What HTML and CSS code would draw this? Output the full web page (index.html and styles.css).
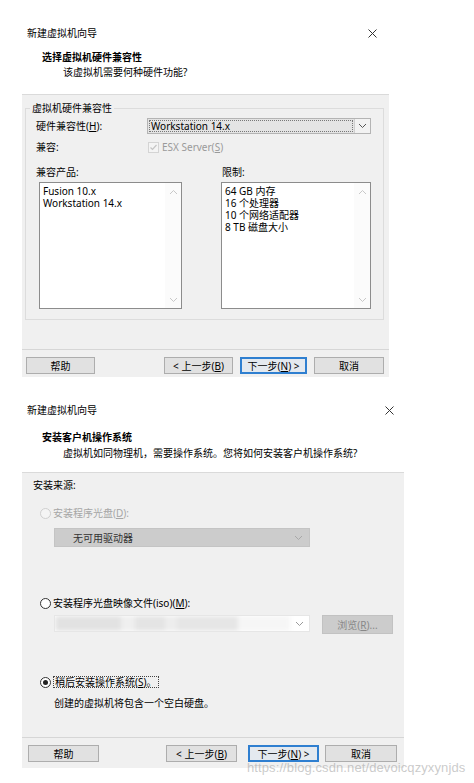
FILE: index.html
```html
<!DOCTYPE html>
<html lang="zh-CN">
<head>
  <meta charset="UTF-8" />
  <meta name="viewport" content="width=device-width, initial-scale=1.0" />
  <title>新建虚拟机向导</title>
  <link rel="stylesheet" href="styles.css">
</head>
<body>
  <!-- Passo 1: compatibilidade de hardware -->
  <div class="wizard wizard-hw">
    <div class="titlebar">
      <span>新建虚拟机向导</span>
      <svg class="close" width="9" height="9" viewBox="0 0 9 9"><path d="M0.5 0.5 L8.5 8.5 M8.5 0.5 L0.5 8.5" stroke="#333" stroke-width="1"/></svg>
    </div>
    <div class="header">
      <div class="header-title">选择虚拟机硬件兼容性</div>
      <div class="header-sub">该虚拟机需要何种硬件功能?</div>
    </div>
    <div class="wizard-body">
      <fieldset class="group">
        <legend>虚拟机硬件兼容性</legend>
        <div class="form-row row-compat">
          <label>硬件兼容性(<u>H</u>):</label>
          <div class="combo">
            <div class="combo-value"><span>Workstation 14.x</span></div>
            <div class="combo-arrow">
              <svg width="9" height="6" viewBox="0 0 9 6"><polyline points="1,1 4.5,4.5 8,1" fill="none" stroke="#555" stroke-width="1"/></svg>
            </div>
          </div>
        </div>
        <div class="form-row row-esx">
          <label>兼容:</label>
          <div class="check-field">
            <span class="checkbox">
              <svg width="9" height="9" viewBox="0 0 9 9"><polyline points="1.5,4.5 3.5,6.5 7.5,2" fill="none" stroke="#c4c4c4" stroke-width="1.2"/></svg>
            </span>
            <span class="muted">ESX Server(<u>S</u>)</span>
          </div>
        </div>
        <div class="lists">
          <div class="list-col">
            <div class="list-label">兼容产品:</div>
            <div class="listbox list-products">
              <div class="list-items">
                <div>Fusion 10.x</div>
                <div>Workstation 14.x</div>
              </div>
              <div class="scroll">
                <svg width="9" height="6" viewBox="0 0 9 6"><polyline points="1,5 4.5,1.5 8,5" fill="none" stroke="#c8c8c8" stroke-width="1"/></svg>
                <svg width="9" height="6" viewBox="0 0 9 6"><polyline points="1,1 4.5,4.5 8,1" fill="none" stroke="#c8c8c8" stroke-width="1"/></svg>
              </div>
            </div>
          </div>
          <div class="list-col">
            <div class="list-label">限制:</div>
            <div class="listbox list-limits">
              <div class="list-items">
                <div>64 GB 内存</div>
                <div>16 个处理器</div>
                <div>10 个网络适配器</div>
                <div>8 TB 磁盘大小</div>
              </div>
              <div class="scroll">
                <svg width="9" height="6" viewBox="0 0 9 6"><polyline points="1,5 4.5,1.5 8,5" fill="none" stroke="#c8c8c8" stroke-width="1"/></svg>
                <svg width="9" height="6" viewBox="0 0 9 6"><polyline points="1,1 4.5,4.5 8,1" fill="none" stroke="#c8c8c8" stroke-width="1"/></svg>
              </div>
            </div>
          </div>
        </div>
      </fieldset>

      <div class="footer">
        <button class="btn">帮助</button>
        <div class="nav">
          <button class="btn">&lt; 上一步(<u>B</u>)</button>
          <button class="btn btn-default">下一步(<u>N</u>) &gt;</button>
          <button class="btn">取消</button>
        </div>
      </div>
    </div>
  </div>

  <!-- Passo 2: instalação do sistema convidado -->
  <div class="wizard wizard-os">
    <div class="titlebar">
      <span>新建虚拟机向导</span>
      <svg class="close" width="9" height="9" viewBox="0 0 9 9"><path d="M0.5 0.5 L8.5 8.5 M8.5 0.5 L0.5 8.5" stroke="#333" stroke-width="1"/></svg>
    </div>
    <div class="header">
      <div class="header-title">安装客户机操作系统</div>
      <div class="header-sub">虚拟机如同物理机，需要操作系统。您将如何安装客户机操作系统?</div>
    </div>
    <div class="wizard-body">
      <div class="source-label">安装来源:</div>

      <div class="radio-row row-disc disabled">
        <span class="radio"></span>
        <span>安装程序光盘(<u>D</u>):</span>
      </div>
      <div class="select-disabled">
        <span>无可用驱动器</span>
        <svg width="9" height="6" viewBox="0 0 9 6"><polyline points="1,1 4.5,4.5 8,1" fill="none" stroke="#a8a8a8" stroke-width="1"/></svg>
      </div>

      <div class="radio-row row-iso">
        <span class="radio"></span>
        <span>安装程序光盘映像文件(iso)(<u>M</u>):</span>
      </div>
      <div class="iso-row">
        <div class="combo-path">
          <div class="path-blur"></div>
          <svg width="9" height="6" viewBox="0 0 9 6"><polyline points="1,1 4.5,4.5 8,1" fill="none" stroke="#9a9a9a" stroke-width="1"/></svg>
        </div>
        <button class="btn btn-browse">浏览(<u>R</u>)...</button>
      </div>

      <div class="radio-row row-later">
        <span class="radio checked"></span>
        <span class="focus-text">稍后安装操作系统(<u>S</u>)。</span>
      </div>
      <div class="later-note">创建的虚拟机将包含一个空白硬盘。</div>

      <div class="footer">
        <button class="btn">帮助</button>
        <div class="nav">
          <button class="btn">&lt; 上一步(<u>B</u>)</button>
          <button class="btn btn-default">下一步(<u>N</u>) &gt;</button>
          <button class="btn">取消</button>
        </div>
      </div>

      <div class="watermark">https://blog.csdn.net/devoicqzyxynjds</div>
    </div>
  </div>
</body>
</html>
```

FILE: styles.css
```css
body {
  margin: 0;
  padding-bottom: 13px;
  background-color: #fff;
  font-family: "Noto Sans", "Noto Sans CJK SC", sans-serif;
  font-size: 10px;
  line-height: 12px;
  color: #000;
}

u {
  text-decoration: underline;
  text-underline-offset: 1px;
}

.wizard {
  margin-left: 22px;
}

.wizard-hw {
  width: 367px;
}

.wizard-os {
  width: 382px;
}

/* Barra de título */
.titlebar {
  height: 47px;
  box-sizing: border-box;
  padding: 27px 12px 0 5px;
  display: flex;
  justify-content: space-between;
  align-items: flex-start;
}

.titlebar .close {
  margin-top: 2px;
}

.wizard-os .titlebar {
  padding-right: 10px;
}

/* Cabeçalho */
.header {
  height: 47px;
  box-sizing: border-box;
  padding: 4px 0 0 20px;
}

.header-title {
  font-weight: bold;
}

.header-sub {
  margin-top: 3px;
  padding-left: 21px;
}

.wizard-os .header {
  height: 48px;
  padding-top: 7px;
}

.wizard-os .header-sub {
  margin-top: 4px;
}

.wizard-body {
  position: relative;
  background-color: #f0f0f0;
  border-top: 1px solid #dadada;
}

/* Grupo de compatibilidade */
.group {
  margin: 7px 5px 0 3px;
  padding: 4px 12px 10px 10px;
  border: 1px solid #dcdcdc;
  min-width: 0;
}

.group legend {
  margin-left: -6px;
  padding: 0 2px;
  line-height: 12px;
}

.form-row {
  display: grid;
  grid-template-columns: 111px 1fr;
  align-items: center;
}

.row-compat {
  height: 16px;
}

.row-esx {
  height: 14px;
  margin-top: 6px;
}

.combo {
  display: flex;
  height: 16px;
  box-sizing: border-box;
  border: 1px solid #b4b4b4;
  background-color: #f2f2f2;
}

.combo-value {
  flex: 1;
  padding: 1px;
  background-color: #e4e4e4;
  border-right: 1px solid #cfcfcf;
}

.combo-value span {
  display: block;
  height: 12px;
  line-height: 11px;
  padding-left: 1px;
  border: 1px dotted #777;
  box-sizing: border-box;
}

.combo-arrow {
  width: 15px;
  display: flex;
  align-items: center;
  justify-content: center;
}

.check-field {
  display: flex;
  align-items: center;
  gap: 3px;
  padding-left: 1px;
}

.checkbox {
  width: 9px;
  height: 9px;
  border: 1px solid #d4d4d4;
  background-color: #f4f4f4;
  display: flex;
}

.muted {
  color: #9a9a9a;
}

.lists {
  display: grid;
  grid-template-columns: 146px 150px;
  column-gap: 39px;
  margin-top: 12px;
}

.list-label {
  height: 12px;
}

.list-col + .list-col .list-label {
  padding-left: 1px;
}

.listbox {
  display: flex;
  height: 127px;
  box-sizing: border-box;
  margin-top: 4px;
  border: 1px solid #8c8c8c;
  background-color: #fff;
}

.list-products {
  margin-left: 3px;
}

.list-items {
  flex: 1;
  padding: 2px 3px;
  line-height: 12px;
}

.scroll {
  width: 16px;
  display: flex;
  flex-direction: column;
  justify-content: space-between;
  align-items: center;
  padding: 6px 0 5px;
  background-color: #fbfbfb;
}

/* Rodapé com botões */
.footer {
  margin-top: 29px;
  border-top: 1px solid #d6d6d6;
  padding: 7px 5px 3px 4px;
  display: flex;
  justify-content: space-between;
}

.nav {
  display: flex;
}

.btn {
  width: 69px;
  height: 17px;
  padding: 0;
  font-family: inherit;
  font-size: 10px;
  line-height: 12px;
  color: #000;
  background-color: #e1e1e1;
  border: 1px solid #adadad;
}

.nav .btn + .btn {
  margin-left: 7px;
}

.nav .btn-default {
  margin-left: 8px;
  width: 67px;
}

.nav .btn-default + .btn {
  width: 70px;
}

.btn-default {
  border-color: #2f7fd0;
  box-shadow: inset 0 0 0 1px #2f7fd0;
  background-color: #e4e9ef;
}

.wizard-os .footer {
  margin-top: 28px;
  padding: 7px 7px 6px 6px;
}

.wizard-os .btn {
  width: 71px;
}

.wizard-os .nav .btn-default {
  margin-left: 11px;
  width: 71px;
}

.wizard-os .nav .btn-default + .btn {
  margin-left: 6px;
  width: 72px;
}

/* Origem da instalação */
.source-label {
  padding: 6px 0 0 11px;
}

.radio-row {
  display: flex;
  align-items: center;
  gap: 2px;
  padding-left: 18px;
  height: 12px;
}

.radio {
  width: 11px;
  height: 11px;
  box-sizing: border-box;
  border: 1px solid #333;
  border-radius: 50%;
  background-color: #fff;
  display: flex;
  align-items: center;
  justify-content: center;
}

.radio.checked::after {
  content: "";
  width: 5px;
  height: 5px;
  border-radius: 50%;
  background-color: #222;
}

.disabled {
  color: #a6a6a6;
}

.disabled .radio {
  border-color: #cfcfcf;
  background-color: #f4f4f4;
}

.row-disc {
  margin-top: 16px;
}

.select-disabled {
  margin: 9px 0 0 32px;
  width: 256px;
  height: 19px;
  box-sizing: border-box;
  padding: 0 6px 0 18px;
  background-color: #cccccc;
  border: 1px solid #c4c4c4;
  display: flex;
  justify-content: space-between;
  align-items: center;
  color: #333;
}

.row-iso {
  margin-top: 50px;
}

.iso-row {
  display: flex;
  align-items: flex-start;
  gap: 12px;
  margin: 6px 0 0 32px;
}

.combo-path {
  width: 256px;
  height: 17px;
  box-sizing: border-box;
  border: 1px solid #e6e6e6;
  background-color: #fff;
  display: flex;
  align-items: center;
  padding-right: 5px;
  gap: 5px;
  overflow: hidden;
}

.path-blur {
  flex: 1;
  height: 100%;
  background:
    linear-gradient(90deg, #e2e2e2 0 28%, #efefef 28% 34%, #e4e4e4 34% 47%, #ededed 47% 52%, #e6e6e6 52% 78%, #f6f6f6 78% 100%);
  filter: blur(2px);
}

.btn-browse {
  width: 68px;
  height: 19px;
  background-color: #cccccc;
  border-color: #c2c2c2;
  color: #888;
}

.row-later {
  margin-top: 42px;
}

.focus-text {
  border: 1px dotted #444;
  line-height: 10px;
  padding: 0 1px;
}

.later-note {
  margin-top: 9px;
  padding-left: 32px;
}

/* Marca d'água sobre o rodapé */
.watermark {
  position: absolute;
  left: 225px;
  bottom: -7px;
  font-family: "Liberation Sans", Arial, sans-serif;
  font-size: 13px;
  line-height: 15px;
  color: rgba(150, 150, 150, 0.5);
  letter-spacing: 0.1px;
}
```
